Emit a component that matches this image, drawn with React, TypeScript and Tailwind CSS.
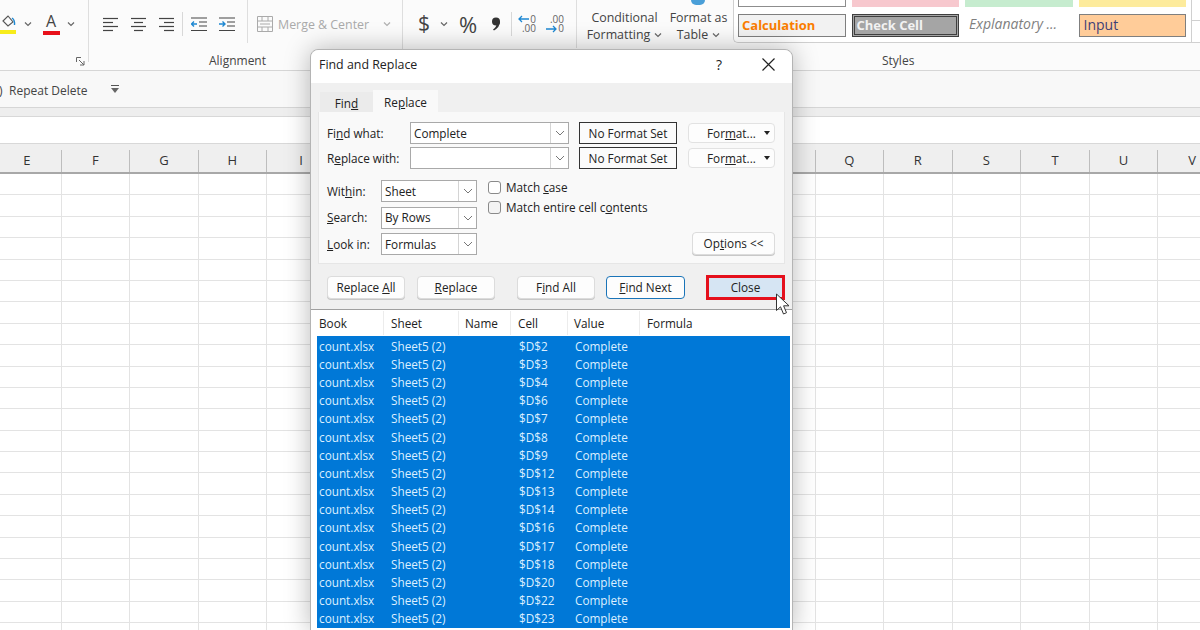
import React from 'react';

const COLS = ['E', 'F', 'G', 'H', 'I', 'J', 'K', 'L', 'M', 'N', 'O', 'P', 'Q', 'R', 'S', 'T', 'U', 'V'];
const CELLS = [2, 3, 4, 6, 7, 8, 9, 12, 13, 14, 16, 17, 18, 20, 22, 23];
const GRID_ROWS = Array.from({ length: 22 }, (_, i) => i);

const Chevron = ({ className = '' }: { className?: string }) => (
  <svg width="8" height="6" viewBox="0 0 8 6" className={className} fill="none" stroke="#666" strokeWidth="1.2">
    <path d="M1 1.5 L4 4.5 L7 1.5" />
  </svg>
);

const Lines = ({ rows }: { rows: [number, number][] }) => (
  <svg width="16" height="15" viewBox="0 0 16 15" stroke="#444" strokeWidth="1.2">
    {rows.map(([a, b], i) => (
      <path key={i} d={`M${a} ${1.5 + i * 4} H${b}`} />
    ))}
  </svg>
);

const Indent = ({ flip }: { flip?: boolean }) => (
  <svg width="16" height="15" viewBox="0 0 16 15" fill="none">
    <path d="M0 1 H16 M8 5 H16 M8 9 H16 M0 13.5 H16" stroke="#444" strokeWidth="1.2" />
    {flip ? (
      <path d="M0 7 H6 M3.5 4.5 L6 7 L3.5 9.5" stroke="#1e88d2" strokeWidth="1.4" />
    ) : (
      <path d="M6 7 H0.5 M3 4.5 L0.5 7 L3 9.5" stroke="#1e88d2" strokeWidth="1.4" />
    )}
  </svg>
);

const Combo = ({ w, children }: { w: string; children?: React.ReactNode }) => (
  <div className={`flex h-[22px] items-center border border-[#a9a9a9] bg-white ${w}`}>
    <span className="flex-1 pl-[3px]">{children}</span>
    <span className="flex h-full w-[18px] items-center justify-center border-l border-[#d4d4d4]">
      <svg width="10" height="6" viewBox="0 0 10 6" fill="none" stroke="#777" strokeWidth="1">
        <path d="M1 1 L5 5 L9 1" />
      </svg>
    </span>
  </div>
);

const Btn = ({ w, children, className = 'border-[#dcdcdc] shadow-[0_1px_0_#c8c8c8]' }: { w: string; children: React.ReactNode; className?: string }) => (
  <div className={`flex h-[23px] items-center justify-center rounded-[4px] border bg-[#fdfdfd] ${w} ${className}`}>
    <span>{children}</span>
  </div>
);

const FormatBtn = () => (
  <div className="ml-[11px] flex h-[20px] w-[87px] items-center rounded-[4px] border border-[#e2e2e2] bg-[#fdfdfd] pl-[18px]">
    <span>For<u>m</u>at...</span>
    <span className="ml-auto mr-[4px] h-0 w-0 border-x-[3px] border-t-[4px] border-x-transparent border-t-[#222]" />
  </div>
);

const NoFormat = () => (
  <div className="ml-[10px] flex h-[22px] w-[98px] items-center justify-center border-[1.5px] border-[#333] bg-[#fbfbfb]">
    No Format Set
  </div>
);

const Ribbon = () => (
  <div className="flex h-[71px] overflow-hidden border-b border-[#d6d6d6] bg-[#fbfbfb] text-[12px] text-[#444]">
    <div className="relative h-[62px] w-[89px] shrink-0 border-r border-[#dedede]">
      <div className="flex h-[48px] items-center">
        <svg width="16" height="22" viewBox="0 0 16 22" fill="none" className="shrink-0">
          <path d="M3 8 L8 3 L13 9 L8 13 Z" stroke="#555" strokeWidth="1.1" />
          <path d="M12 5 Q15 7 14.5 12" stroke="#1e88d2" strokeWidth="1.4" />
          <rect x="0" y="17" width="16" height="4" fill="#f7ec1b" />
        </svg>
        <Chevron className="ml-[8px]" />
        <div className="ml-[10px] flex w-[18px] flex-col items-center">
          <span className="h-[17px] text-[16px] leading-[17px] text-[#444]">A</span>
          <span className="mt-[1px] h-[4px] w-[17px] bg-[#e8101a]" />
        </div>
        <Chevron className="ml-[7px]" />
      </div>
      <svg width="9" height="9" viewBox="0 0 9 9" fill="none" stroke="#666" className="absolute left-[76px] top-[57px]">
        <path d="M0.5 5 V0.5 H5 M3 3 L8 8 M8 4 V8 H4" />
      </svg>
    </div>

    <div className="flex w-[314px] shrink-0 flex-col border-r border-[#dedede]">
      <div className="flex h-[48px] items-center">
        <div className="ml-[14px]"><Lines rows={[[0, 15], [0, 10], [0, 15], [0, 10]]} /></div>
        <div className="ml-[12px]"><Lines rows={[[0, 15], [3, 12], [0, 15], [3, 12]]} /></div>
        <div className="ml-[12px]"><Lines rows={[[0, 15], [5, 15], [0, 15], [5, 15]]} /></div>
        <span className="ml-[7px] h-[24px] border-l border-[#d8d8d8]" />
        <div className="ml-[8px]"><Indent /></div>
        <div className="ml-[12px]"><Indent flip /></div>
        <span className="ml-[12px] h-[43px] self-start border-l border-[#dedede]" />
        <svg width="16" height="16" viewBox="0 0 16 16" fill="none" stroke="#aaa" className="ml-[9px] shrink-0">
          <path d="M0.5 0.5 H15.5 V15.5 H0.5 Z M0.5 5 H15.5 M0.5 11 H15.5 M5 0.5 V5 M11 0.5 V5 M5 11 V15.5 M11 11 V15.5 M3 8 H13" />
        </svg>
        <span className="ml-[5px] mt-[2px] whitespace-nowrap text-[12.4px] text-[#aaa]">Merge &amp; Center</span>
        <Chevron className="ml-[14px] opacity-50" />
      </div>
      <div className="ml-[120px] mt-[4px] leading-[18px]">Alignment</div>
    </div>

    <div className="flex h-[48px] w-[174px] shrink-0 items-center border-r border-[#dedede]">
      <span className="ml-[14px] w-[14px] text-center text-[21px] text-[#444]">$</span>
      <Chevron className="ml-[9px]" />
      <span className="ml-[8px] w-[24px] text-center text-[22px] text-[#444]">%</span>
      <svg width="12" height="14" viewBox="0 0 12 14" className="ml-[10px] shrink-0" fill="#333">
        <circle cx="6" cy="4.5" r="4" />
        <path d="M10 4.5 Q10 10 4 13.5 L3 12.5 Q6.5 10 6.5 7 Z" />
      </svg>
      <span className="ml-[9px] h-[24px] border-l border-[#d8d8d8]" />
      <div className="relative ml-[6px] h-[18px] w-[18px] text-[10px] leading-[9px] text-[#666]">
        <span className="absolute right-0 top-0">0</span>
        <span className="absolute right-0 top-[9px]">.00</span>
        <svg width="11" height="8" viewBox="0 0 11 8" fill="none" stroke="#1e88d2" strokeWidth="1.3" className="absolute left-0 top-0">
          <path d="M11 4 H1 M4 1 L1 4 L4 7" />
        </svg>
      </div>
      <div className="relative ml-[10px] h-[18px] w-[18px] text-[10px] leading-[9px] text-[#666]">
        <span className="absolute right-0 top-0">.00</span>
        <span className="absolute right-0 top-[9px]">0</span>
        <svg width="11" height="8" viewBox="0 0 11 8" fill="none" stroke="#1e88d2" strokeWidth="1.3" className="absolute left-0 top-[10px]">
          <path d="M0 4 H10 M7 1 L10 4 L7 7" />
        </svg>
      </div>
    </div>

    <div className="flex flex-1 flex-col">
      <div className="flex h-[43px]">
        <div className="ml-[11px] flex w-[73px] flex-col items-center pt-[9px] text-[12.4px] leading-[17px]">
          <span>Conditional</span>
          <span className="flex items-center whitespace-nowrap">Formatting<Chevron className="ml-[4px]" /></span>
        </div>
        <div className="relative ml-[3px] flex w-[69px] flex-col items-center pt-[9px] text-[12.4px] leading-[17px]">
          <span className="absolute left-[27px] top-0 h-[5px] w-[14px] rounded-b-full bg-[#4a9fd8]" />
          <span className="whitespace-nowrap">Format as</span>
          <span className="flex items-center">Table<Chevron className="ml-[4px]" /></span>
        </div>
        <div className="flex h-[43px] w-[467px] shrink-0 rounded-bl-[5px] border-b border-l border-[#d0d0d0] bg-white">
          <div className="w-[457px] pl-[4px] pr-[5px] text-[13px]">
            <div className="grid h-[7px] grid-cols-4 gap-x-[6px] overflow-hidden">
              <div className="border-x border-b border-[#8d8d8d] bg-white" />
              <div className="bg-[#f7c8ce]" />
              <div className="bg-[#c6eccf]" />
              <div className="bg-[#fdeb9c]" />
            </div>
            <div className="mt-[7px] grid h-[23px] grid-cols-4 gap-x-[6px] leading-[20px]">
              <div className="border border-[#7f7f7f] bg-[#f2f2f2] pl-[3px] font-bold text-[#fa7d00]">Calculation</div>
              <div className="border-[3px] border-double border-[#3f3f3f] bg-[#a5a5a5] pl-[2px] font-bold leading-[16px] text-[#f2f2f2]">Check Cell</div>
              <div className="whitespace-nowrap pl-[4px] text-[14px] italic text-[#7f7f7f]">Explanatory ...</div>
              <div className="border border-[#7f7f7f] bg-[#ffcc99] pl-[4px] text-[14px] text-[#3f3f76]">Input</div>
            </div>
          </div>
          <div className="flex-1 border-l border-[#d0d0d0]">
            <div className="h-[21px] border-b border-[#d0d0d0]" />
          </div>
        </div>
      </div>
      <div className="ml-[305px] mt-[9px] leading-[18px]">Styles</div>
    </div>
  </div>
);

const Dialog = () => (
  <div className="absolute left-[310px] top-[49px] h-[582px] w-[483px] rounded-t-lg border border-[#b4b4b4] bg-[#f0f0f0] text-[11.75px] leading-[15px] text-[#222] shadow-[0_0_26px_rgba(0,0,0,0.28)]">
    <div className="flex h-[33px] items-center rounded-t-lg bg-white pb-[4px] pl-[8px] pr-[17px] text-[12.4px]">
      <span>Find and Replace</span>
      <span className="ml-auto text-[14px] font-medium">?</span>
      <svg width="13" height="13" viewBox="0 0 13 13" stroke="#222" strokeWidth="1.2" className="ml-[40px]">
        <path d="M0.5 0.5 L12.5 12.5 M12.5 0.5 L0.5 12.5" />
      </svg>
    </div>

    <div className="ml-[9px] mt-[7px] flex h-[22px] items-end">
      <div className="flex h-[20px] w-[53px] items-center justify-center bg-[#ebebeb] pt-[2px]"><span>Fin<u>d</u></span></div>
      <div className="flex h-[22px] w-[65px] items-center justify-center bg-[#f9f9f9] pt-[2px]"><span>Re<u>p</u>lace</span></div>
    </div>

    <div className="mx-[7px] h-[152px] border border-t-0 border-[#e6e6e6] bg-[#f9f9f9] pl-[8px] pr-[9px] pt-[10px]">
      <div className="flex items-center">
        <span className="w-[83px]">Fi<u>n</u>d what:</span>
        <Combo w="w-[159px]">Complete</Combo>
        <NoFormat />
        <FormatBtn />
      </div>
      <div className="mt-[3px] flex items-center">
        <span className="w-[83px]">R<u>e</u>place with:</span>
        <Combo w="w-[159px]" />
        <NoFormat />
        <FormatBtn />
      </div>
      <div className="mt-[11px] flex">
        <div className="flex flex-col gap-[4.5px]">
          <div className="flex items-center"><span className="w-[54px]">Wit<u>h</u>in:</span><Combo w="w-[96px]">Sheet</Combo></div>
          <div className="flex items-center"><span className="w-[54px]"><u>S</u>earch:</span><Combo w="w-[96px]">By Rows</Combo></div>
          <div className="flex items-center"><span className="w-[54px]"><u>L</u>ook in:</span><Combo w="w-[96px]">Formulas</Combo></div>
        </div>
        <div className="ml-[11px] flex flex-col gap-[5px]">
          <div className="flex items-center"><span className="h-[13px] w-[13px] rounded-[3px] border border-[#8a8a8a] bg-white" /><span className="ml-[5px]">Match <u>c</u>ase</span></div>
          <div className="flex items-center"><span className="h-[13px] w-[13px] rounded-[3px] border border-[#8a8a8a] bg-[#f4f4f4]" /><span className="ml-[5px]">Match entire cell c<u>o</u>ntents</span></div>
        </div>
        <Btn w="w-[83px]" className="ml-auto mt-[52px] border-[#dcdcdc] shadow-[0_1px_0_#c8c8c8]">Op<u>t</u>ions &lt;&lt;</Btn>
      </div>
    </div>

    <div className="ml-[16px] mt-[11px] flex items-center">
      <Btn w="w-[78px]">Replace <u>A</u>ll</Btn>
      <Btn w="w-[78px]" className="ml-[12px] border-[#dcdcdc] shadow-[0_1px_0_#c8c8c8]"><u>R</u>eplace</Btn>
      <Btn w="w-[78px]" className="ml-[22px] border-[#dcdcdc] shadow-[0_1px_0_#c8c8c8]">F<u>i</u>nd All</Btn>
      <Btn w="w-[79px]" className="ml-[11px] border-[#1a74b8]"><u>F</u>ind Next</Btn>
      <div className="ml-[21px] flex h-[25px] w-[79px] items-center justify-center border-[3px] border-[#e5101c] bg-[#d6e5f3]">Close</div>
    </div>

    <div className="mt-[9px] h-[322px] border-t border-[#a0a0a0] bg-white pl-[6px] pr-[2px]">
      <div className="flex h-[26px] items-center">
        <span className="w-[67px] border-r border-[#ececec] pl-[2px] leading-[24px]">Book</span>
        <span className="w-[75px] border-r border-[#ececec] pl-[7px] leading-[24px]">Sheet</span>
        <span className="w-[52px] border-r border-[#ececec] pl-[6px] leading-[24px]">Name</span>
        <span className="w-[57px] border-r border-[#ececec] pl-[7px] leading-[24px]">Cell</span>
        <span className="w-[72px] border-r border-[#ececec] pl-[6px] leading-[24px]">Value</span>
        <span className="pl-[7px] leading-[24px]">Formula</span>
      </div>
      <div className="bg-[#0078d7] pt-[1px] text-[#dcefff]">
        {CELLS.map((n) => (
          <div key={n} className="flex h-[18.2px] items-center whitespace-nowrap">
            <span className="w-[74px] pl-[2px]">count.xlsx</span>
            <span className="w-[128px]">Sheet5 (2)</span>
            <span className="w-[56px]">$D${n}</span>
            <span>Complete</span>
          </div>
        ))}
      </div>
    </div>

    <svg width="18" height="23" viewBox="0 0 18 23" className="absolute left-[464px] top-[243px]">
      <path d="M1.5 1 V17.5 L5.5 13.8 L8.5 21 L11.5 19.7 L8.6 12.8 L14 12.8 Z" fill="#fff" stroke="#333" strokeWidth="1" />
    </svg>
  </div>
);

export default function App() {
  return (
    <div className="relative h-[630px] w-[1200px] overflow-hidden bg-white font-['Open_Sans',sans-serif]">
      <Ribbon />

      <div className="flex h-[37px] items-center border-b border-[#d6d6d6] bg-[#f8f8f8] text-[12px] text-[#444]">
        <span className="-ml-[1px] mt-[4px] w-[10px] overflow-hidden text-left">)</span>
        <span className="mt-[4px]">Repeat Delete</span>
        <span className="ml-[23px] flex flex-col items-center">
          <span className="h-[1px] w-[8px] bg-[#555]" />
          <span className="mt-[2px] h-0 w-0 border-x-[4px] border-t-[5px] border-x-transparent border-t-[#666]" />
        </span>
      </div>
      <div className="h-[9px] border-b border-[#d8d8d8] bg-[#eeeeee]" />
      <div className="h-[27px] border-b border-[#d8d8d8] bg-white" />

      <div className="-ml-[7px] flex h-[30px] w-[1240px] border-b-2 border-[#a8a8a8] bg-[#efefef] text-[13px] text-[#333]">
        {COLS.map((c) => (
          <div key={c} className="mt-[6px] flex h-[22px] w-[68.55px] shrink-0 items-center justify-center border-r border-[#bdbdbd]">
            {c}
          </div>
        ))}
      </div>

      <div className="-ml-[7px] w-[1240px]">
        {GRID_ROWS.map((r) => (
          <div key={r} className="flex h-[21.4px] border-b border-[#e3e3e3]">
            {COLS.map((c) => (
              <div key={c} className="h-full w-[68.55px] shrink-0 border-r border-[#e3e3e3]" />
            ))}
          </div>
        ))}
      </div>

      <Dialog />
    </div>
  );
}
